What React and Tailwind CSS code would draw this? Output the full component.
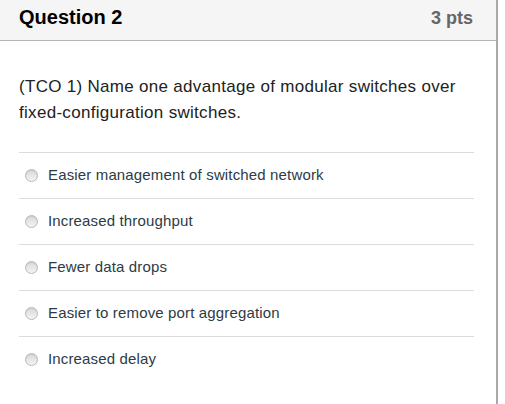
import React from 'react';

const options = [
  'Easier management of switched network',
  'Increased throughput',
  'Fewer data drops',
  'Easier to remove port aggregation',
  'Increased delay',
];

function Radio() {
  return (
    <span className="block w-[13px] h-[13px] rounded-full border border-[#b9b9b9] bg-gradient-to-b from-[#d9d9d9] to-[#f4f4f4] shadow-[inset_0_1px_1px_rgba(0,0,0,0.08)]" />
  );
}

export default function App() {
  return (
    <div className="w-[505px] h-[404px] bg-white overflow-hidden font-['Liberation_Sans',Arial,sans-serif]">
      <div className="w-[498px] h-[404px] border-r-2 border-[#a9a9a9]">
        {/* Header */}
        <div className="h-[41px] bg-[#f5f5f5] border-b border-[#b4b4b4] flex items-start justify-between pl-[19px] pr-[23px] pt-[7px]">
          <h2 className="text-[20px] font-bold text-black leading-[20px]">Question 2</h2>
          <span className="text-[18px] font-bold text-[#666] leading-[20px] mt-[1px]">3 pts</span>
        </div>

        <div className="pl-[19px] pr-[22px] pt-[33px]">
          <p className="text-[17px] leading-[26px] tracking-[0.3px] text-[#222]">
            (TCO 1) Name one advantage of modular switches over fixed-configuration switches.
          </p>

          <div className="mt-[26px]">
            {options.map((opt) => (
              <div key={opt} className="h-[46px] border-t border-[#dcdcdc] flex items-center pl-[6px] gap-[10px]">
                <Radio />
                <span className="text-[15px] tracking-[0.15px] text-[#2d3b45]">{opt}</span>
              </div>
            ))}
          </div>
        </div>
      </div>
    </div>
  );
}
